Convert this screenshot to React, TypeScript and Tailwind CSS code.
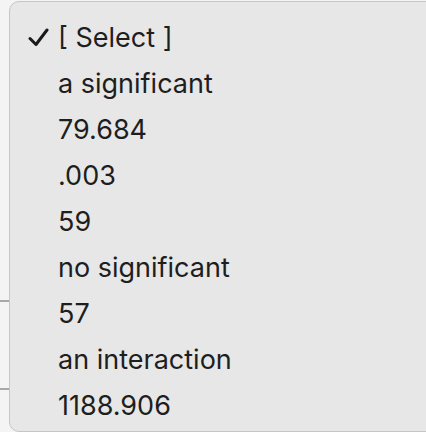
import React from "react";

const items = [
  "[ Select ]",
  "a significant",
  "79.684",
  ".003",
  "59",
  "no significant",
  "57",
  "an interaction",
  "1188.906",
];

export default function App() {
  return (
    <div
      className="relative w-[426px] h-[432px] overflow-hidden bg-[#f4f4f4]"
      style={{ fontFamily: 'Inter, "Noto Sans", sans-serif' }}
    >
      <div className="flex flex-col w-[10px]">
        <div className="h-[300px]" />
        <div className="h-[2px] bg-[#a8a8a8]" />
        <div className="h-[86px]" />
        <div className="h-[2px] bg-[#a8a8a8]" />
      </div>
      <div className="absolute left-[9px] top-[1px] w-[440px] h-[431px] rounded-[10px] border border-[#c6c6c6] bg-[#e7e7e7] pt-[12px]">
        {items.map((t, i) => (
          <div key={i} className="flex items-center h-[46px]">
            <div className="w-[48px] flex justify-end pr-[9px]">
              {i === 0 && (
                <svg width="21" height="19" viewBox="0 0 21 19" fill="none">
                  <path
                    d="M2 10.5 L8 16.5 L19 2"
                    stroke="#1a1a1a"
                    strokeWidth="3"
                    strokeLinecap="round"
                    strokeLinejoin="round"
                  />
                </svg>
              )}
            </div>
            <span className="text-[27px] leading-none text-[#1e1e1e]">{t}</span>
          </div>
        ))}
      </div>
    </div>
  );
}
